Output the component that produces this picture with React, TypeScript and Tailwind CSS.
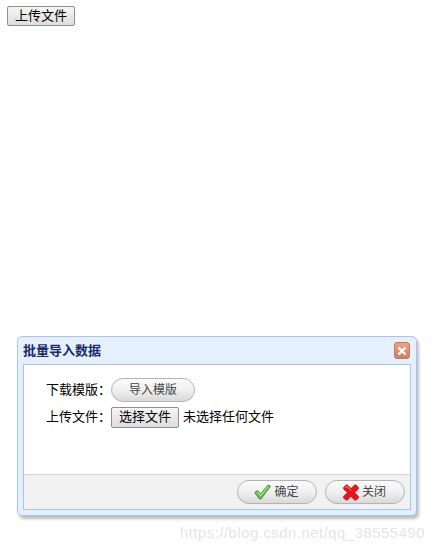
const cjk = "font-['Liberation_Sans','Noto_Sans_CJK_SC',sans-serif]"

// --- Icons -------------------------------------------------------------------

function CheckIcon() {
  return (
    <svg width="17" height="16" viewBox="0 0 17 16" className="shrink-0">
      <path
        d="M0.8 8.5 L3.6 6.6 L6.6 10 L14.2 1 L16.4 2.2 L7 15 L5.4 15 Z"
        fill="#6cc24a"
        stroke="#3f8f35"
        strokeWidth="1"
        strokeLinejoin="round"
      />
      <path d="M3.6 8 L6.6 11.6 L14.4 2.4" fill="none" stroke="#c4eda0" strokeWidth="1" />
    </svg>
  )
}

function CrossIcon() {
  return (
    <svg width="18" height="17" viewBox="0 0 18 17" className="shrink-0">
      <path
        d="M1.5 3.5 L4 1 Q5 0.5 6 1.5 L9 4.5 L12 1.5 Q13 0.5 14 1 L16.5 3.5 Q17 4.5 16 5.5 L12.5 8.5 L16 12 Q17 13 16.5 14 L14 16 Q13 16.5 12 15.5 L9 12.5 L6 15.5 Q5 16.5 4 16 L1.5 14 Q1 13 2 12 L5.5 8.5 L2 5.5 Q1 4.5 1.5 3.5 Z"
        fill="#e8141c"
        stroke="#b01016"
        strokeWidth="0.7"
      />
      <path d="M3 3.5 L5 2.5 L9 6.5" fill="none" stroke="#ff9a9a" strokeWidth="1" />
    </svg>
  )
}

function CloseIcon() {
  return (
    <div className="flex h-[17px] w-[16px] items-center justify-center rounded-[3px] border border-[#c07a5e] bg-gradient-to-b from-[#e8a58c] to-[#d0805f]">
      <svg width="10" height="10" viewBox="0 0 10 10">
        <path d="M1.5 1.5 L8.5 8.5 M8.5 1.5 L1.5 8.5" stroke="#ffffff" strokeWidth="2.4" />
      </svg>
    </div>
  )
}

// --- Pill button -------------------------------------------------------------

function PillButton({ width, children }: { width: string; children: React.ReactNode }) {
  return (
    <div
      className={`flex h-[24px] ${width} items-center justify-center rounded-full border border-[#b4b4b4] bg-gradient-to-b from-[#fbfbfb] via-[#f0f0f0] to-[#d9d9d9] text-[12px] text-[#444444]`}
    >
      {children}
    </div>
  )
}

// --- Page --------------------------------------------------------------------

export default function App() {
  return (
    <div className={`relative flex h-[550px] w-[434px] flex-col overflow-hidden bg-white ${cjk}`}>
      <div className="px-[7px] pt-[6px]">
        <button className="flex h-[20px] w-[68px] items-center justify-center rounded-[2px] border border-[#8e8e8e] bg-gradient-to-b from-[#f6f6f6] to-[#dddddd] text-[13px] text-black">
          上传文件
        </button>
      </div>

      {/* Dialog */}
      <div className="ml-[17px] mt-[310px] flex h-[180px] w-[400px] flex-col rounded-[5px] border border-[#a6c4f0] bg-[#e6f0fd] px-[5px] pb-[5px] shadow-[2px_3px_3px_rgba(0,0,0,0.25)]">
        <div className="flex h-[27px] shrink-0 items-center justify-between pr-[1px]">
          <span className="text-[13px] font-bold text-[#1a2a6c]">批量导入数据</span>
          <CloseIcon />
        </div>

        <div className="flex flex-1 flex-col border border-[#a6c4f0] bg-white">
          <div className="flex flex-1 flex-col pl-[22px] pt-[13px] text-[13px] text-black">
            <div className="flex h-[24px] items-center">
              <span className="w-[65px]">下载模版：</span>
              <PillButton width="w-[84px]">导入模版</PillButton>
            </div>
            <div className="mt-[4px] flex h-[22px] items-center">
              <span className="w-[65px]">上传文件：</span>
              <button className="flex h-[21px] w-[68px] items-center justify-center rounded-[2px] border border-[#8e8e8e] bg-gradient-to-b from-[#f6f6f6] to-[#dddddd] text-[13px]">
                选择文件
              </button>
              <span className="ml-[4px]">未选择任何文件</span>
            </div>
          </div>

          {/* Footer */}
          <div className="flex h-[35px] shrink-0 items-center justify-end gap-[8px] border-t border-[#d4d4d4] bg-[#f2f2f2] pr-[5px]">
            <PillButton width="w-[80px] gap-[3px] pr-[1px]">
              <CheckIcon />
              <span>确定</span>
            </PillButton>
            <PillButton width="w-[80px] gap-[2px] pr-[2px]">
              <CrossIcon />
              <span>关闭</span>
            </PillButton>
          </div>
        </div>
      </div>

      {/* Watermark */}
      <span className="absolute left-[180px] top-[522px] text-[15px] tracking-[0.45px] text-[#e4e4e4] blur-[0.4px]">
        https://blog.csdn.net/qq_38555490
      </span>
    </div>
  )
}
